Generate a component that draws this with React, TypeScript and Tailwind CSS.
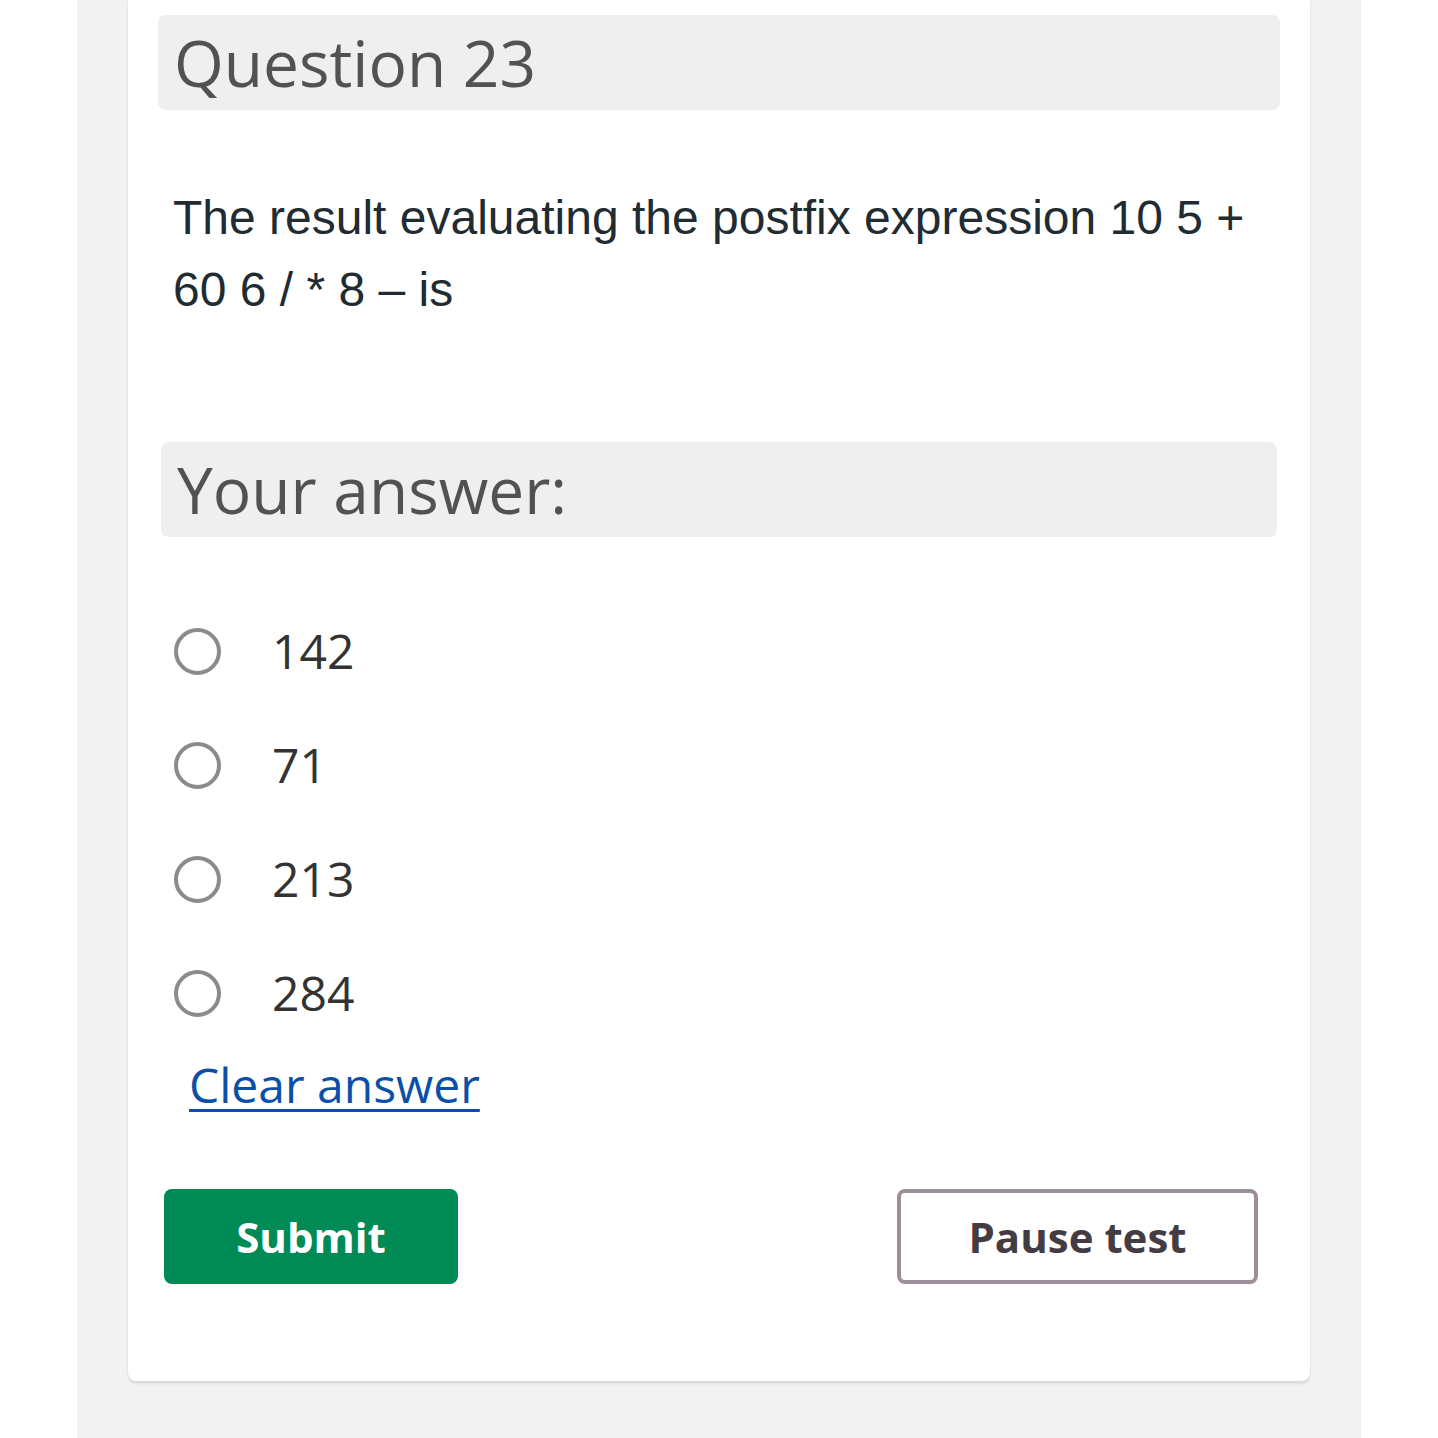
const OPTIONS = ["142", "71", "213", "284"];

function Radio({ label }: { label: string }) {
  return (
    <label className="flex h-[114px] items-center">
      <span className="h-[47px] w-[47px] shrink-0 rounded-full border-[4px] border-[#8b8b8b] bg-white" />
      <span className="ml-[51px] text-[48px] leading-none text-[#333333]">{label}</span>
    </label>
  );
}

export default function App() {
  return (
    <div className="h-[1438px] w-full overflow-hidden bg-white font-['Open_Sans',sans-serif]">
      <div className="ml-[77px] h-full w-[1284px] bg-[#f2f2f2] px-[51px]">
        <div className="rounded-b-[8px] bg-white px-[30px] pt-[15px] pb-[97px] shadow-[0_0_2px_rgba(0,0,0,0.1),0_3px_2px_rgba(0,0,0,0.08)]">
          <div className="flex h-[95px] items-center rounded-[8px] bg-[#efefef] px-[16px]">
            <h1 className="text-[64px] leading-none font-normal text-[#525252]">Question 23</h1>
          </div>

          <p className="mt-[72px] pl-[15px] font-['Liberation_Sans',Arial,sans-serif] text-[48px] leading-[72px] text-[#212b32]">
            The result evaluating the postfix expression 10 5 + 60 6 / * 8 – is
          </p>

          <div className="mx-[3px] mt-[116px] flex h-[95px] items-center rounded-[8px] bg-[#efefef] px-[16px]">
            <h2 className="text-[64px] leading-none font-normal text-[#525252]">Your answer:</h2>
          </div>

          <div className="mt-[57px] pl-[16px]">
            {OPTIONS.map((o) => (
              <Radio key={o} label={o} />
            ))}
          </div>

          <div className="-mt-[1px] pl-[31px]">
            <a href="#" className="text-[48px] text-[#0b50a8] underline decoration-[3px] underline-offset-[6px]">
              Clear answer
            </a>
          </div>

          <div className="mt-[68px] flex items-center justify-between pl-[6px] pr-[22px]">
            <button className="flex h-[95px] w-[294px] items-center justify-center rounded-[8px] bg-[#008a56] text-[42px] font-bold text-white">
              Submit
            </button>
            <button className="flex h-[95px] w-[361px] items-center justify-center rounded-[8px] border-[4px] border-[#9d8f99] bg-white text-[42px] font-bold text-[#433c42]">
              Pause test
            </button>
          </div>
        </div>
      </div>
    </div>
  );
}
